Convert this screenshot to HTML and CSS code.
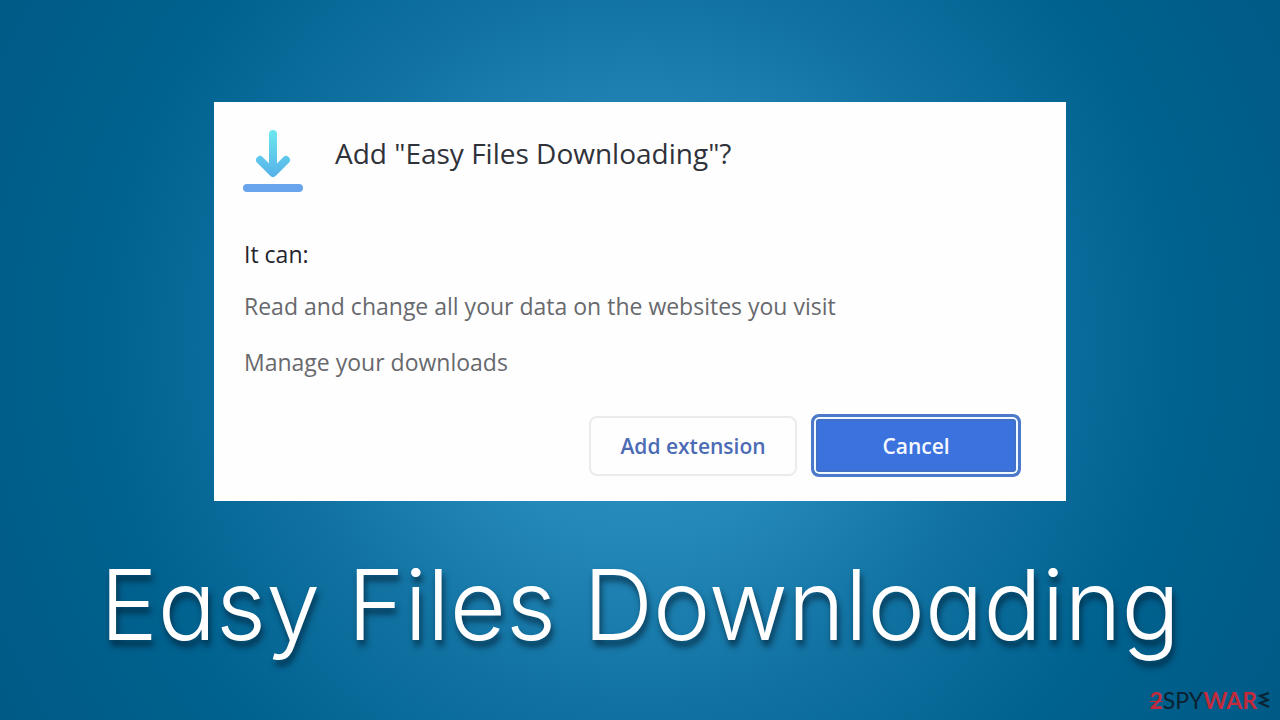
FILE: index.html
```
<!DOCTYPE html>
<html lang="en">
<head>
    <meta charset="UTF-8">
    <meta name="viewport" content="width=device-width, initial-scale=1.0">
    <title>Easy Files Downloading</title>
    <link rel="stylesheet" href="styles.css">
</head>
<body>
    <main class="page">
        <section class="dialog" role="dialog" aria-labelledby="dialog-title">
            <div class="dialog-header">
                <svg class="dialog-icon" viewBox="0 0 62 64" fill="none" stroke-linecap="round" stroke-linejoin="round" aria-hidden="true">
                    <defs>
                        <linearGradient id="arrow" gradientUnits="userSpaceOnUse" x1="0" y1="0" x2="0" y2="50">
                            <stop offset="0" stop-color="#6ee7ee"/>
                            <stop offset="1" stop-color="#54aee8"/>
                        </linearGradient>
                    </defs>
                    <path d="M31 4V42M18 30L31 43L44 30" stroke="url(#arrow)" stroke-width="8"/>
                    <path d="M5 58H57" stroke="#68a5ec" stroke-width="8"/>
                </svg>
                <h2 class="dialog-title" id="dialog-title">Add "Easy Files Downloading"?</h2>
            </div>
            <p class="dialog-label">It can:</p>
            <ul class="permissions">
                <li>Read and change all your data on the websites you visit</li>
                <li>Manage your downloads</li>
            </ul>
            <div class="dialog-actions">
                <button class="button" type="button">Add extension</button>
                <button class="button button-primary" type="button">Cancel</button>
            </div>
        </section>
        <h1 class="headline">Easy Files Downloading</h1>
        <footer class="brand" aria-label="2SPYWARE">
            <span class="brand-two">2</span><span>SPY</span><span class="brand-red">WAR</span>
            <svg class="brand-e" viewBox="0 0 13 18" fill="none" stroke="#0b2230" stroke-width="2" aria-hidden="true">
                <path d="M12 2L3 5L11 9L3 12L12 16"/>
            </svg>
        </footer>
    </main>
</body>
</html>
```
FILE: styles.css
```
* {
    margin: 0;
    padding: 0;
    box-sizing: border-box;
}

body {
    font-family: "Open Sans", "Noto Sans", sans-serif;
    background: #005f8d;
}

.page {
    position: relative;
    display: flex;
    flex-direction: column;
    align-items: center;
    min-height: 100vh;
    padding: 102px 24px 24px;
    overflow: hidden;
    background: radial-gradient(circle at 50% 48%, #3096c6 0, #2488b8 190px, #1172a2 360px, #00628f 540px, #005985 760px);
}

/* Dialog */
.dialog {
    width: 100%;
    max-width: 852px;
    padding: 28px 45px 24px 28px;
    background: #fefefe;
}

.dialog-header {
    display: flex;
    align-items: flex-start;
    gap: 31px;
    margin-bottom: 44px;
}

.dialog-icon {
    width: 62px;
    height: 64px;
}

.dialog-title {
    padding-top: 3px;
    font-size: 28px;
    font-weight: 400;
    line-height: 40px;
    color: #30323a;
}

.dialog-label {
    padding-left: 2px;
    margin-bottom: 20px;
    font-size: 23px;
    line-height: 32px;
    color: #24252c;
}

.permissions {
    display: grid;
    gap: 24px;
    padding-left: 2px;
    margin-bottom: 36px;
    list-style: none;
    font-size: 23px;
    line-height: 32px;
    color: #68696d;
}

.dialog-actions {
    display: flex;
    align-items: center;
    justify-content: flex-end;
    gap: 14px;
}

.button {
    width: 208px;
    height: 60px;
    font-family: inherit;
    font-size: 21px;
    font-weight: 600;
    color: #4c6bb5;
    background: #fefefe;
    border: 2px solid #ebebed;
    border-radius: 8px;
}

.button-primary {
    width: 210px;
    height: 63px;
    color: #f5f9ff;
    background: #3b72de;
    border: 3px solid #4d79cb;
    box-shadow: inset 0 0 0 2px #eefaff, inset 0 0 0 4px #416fc6;
}

/* Headline */
.headline {
    margin-top: 40px;
    font-family: Inter, "Century Gothic", sans-serif;
    font-size: 97px;
    font-weight: 350;
    font-feature-settings: "cv11";
    line-height: 128px;
    text-align: center;
    color: #fff;
    text-shadow: 2px 6px 6px rgba(0, 30, 50, 0.7);
}

/* Corner logo */
.brand {
    position: absolute;
    right: 10px;
    bottom: 8px;
    display: flex;
    align-items: center;
    font-family: Lato, sans-serif;
    font-size: 23px;
    line-height: 24px;
    color: #0b2230;
}

.brand-two {
    font-weight: 700;
    color: #c32b3c;
    text-decoration: line-through;
    text-decoration-thickness: 1px;
}

.brand-red {
    font-weight: 700;
    color: #c32b3c;
}

.brand-e {
    width: 13px;
    height: 18px;
}
```
